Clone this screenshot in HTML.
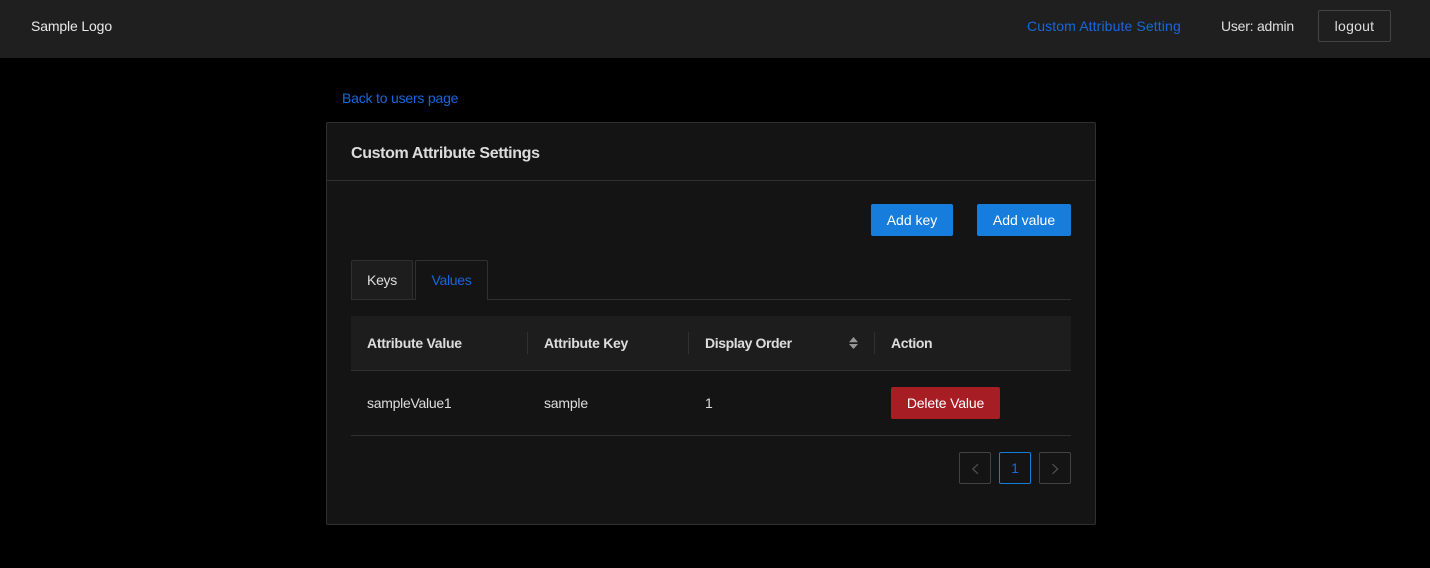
<!DOCTYPE html>
<html lang="en">
<head>
<meta charset="utf-8">
<title>Custom Attribute Settings</title>
<style>
html,body{margin:0;padding:0;background:#000;width:1430px;height:568px;overflow:hidden}
body{position:relative;font-family:"Liberation Sans",sans-serif;font-size:14px;color:rgba(255,255,255,.85)}
.b{position:absolute;box-sizing:border-box}
.t{position:absolute;white-space:nowrap;line-height:22px;height:22px}
.s{font-weight:700}
.l{color:#1668dc}
.btn{position:absolute;box-sizing:border-box;height:32px;line-height:32px;text-align:center;color:#fff;border-radius:2px;white-space:nowrap}
.sep{position:absolute;top:332px;width:1px;height:22px;background:#303030}
.pg{position:absolute;top:452px;width:32px;height:32px;box-sizing:border-box;border:1px solid #434343;border-radius:2px}
</style>
</head>
<body>
<div class="b" style="left:0;top:0;width:1430px;height:58px;background:#1f1f1f"></div>
<div class="t" style="left:31px;top:15px;letter-spacing:-.14px;color:rgba(255,255,255,.9)">Sample Logo</div>
<div class="t l" style="left:1027px;top:15px;letter-spacing:.12px">Custom Attribute Setting</div>
<div class="t" style="left:1221px;top:15px;letter-spacing:-.23px">User: admin</div>
<div class="b" style="left:1318px;top:10px;width:73px;height:32px;border:1px solid #434343;border-radius:2px;text-align:center;line-height:31px;letter-spacing:.25px">logout</div>

<div class="t l" style="left:342px;top:87px;letter-spacing:-.2px">Back to users page</div>

<div class="b" style="left:326px;top:122px;width:770px;height:403px;background:#141414;border:1px solid #303030;border-radius:2px"></div>
<div class="b" style="left:327px;top:180px;width:768px;height:1px;background:#303030"></div>
<div class="t s" style="left:351px;top:143px;font-size:16px;letter-spacing:-.36px">Custom Attribute Settings</div>

<div class="btn" style="left:871px;top:204px;width:82px;background:#177ddc">Add key</div>
<div class="btn" style="left:977px;top:204px;width:94px;background:#177ddc">Add value</div>

<div class="b" style="left:351px;top:299px;width:720px;height:1px;background:#303030"></div>
<div class="b" style="left:351px;top:260px;width:62px;height:40px;background:#1d1d1d;border:1px solid #303030;border-radius:2px 2px 0 0;text-align:center;line-height:39px;letter-spacing:-.3px">Keys</div>
<div class="b l" style="left:415px;top:260px;width:73px;height:40px;background:#141414;border:1px solid #303030;border-bottom:0;border-radius:2px 2px 0 0;text-align:center;line-height:39px;letter-spacing:-.3px">Values</div>

<div class="b" style="left:351px;top:316px;width:720px;height:55px;background:#1d1d1d;border-bottom:1px solid #303030"></div>
<div class="sep" style="left:527px"></div>
<div class="sep" style="left:688px"></div>
<div class="sep" style="left:874px"></div>
<div class="t s" style="left:367px;top:332px;letter-spacing:-.27px">Attribute Value</div>
<div class="t s" style="left:544px;top:332px;letter-spacing:-.3px">Attribute Key</div>
<div class="t s" style="left:705px;top:332px;letter-spacing:-.4px">Display Order</div>
<div class="t s" style="left:891px;top:332px;letter-spacing:-.4px">Action</div>
<svg class="b" style="left:848px;top:336px" width="11" height="14" viewBox="0 0 11 14"><path d="M5.5 1 L10 6.2 H1 Z M1 8 H10 L5.5 13 Z" fill="#979797"/></svg>

<div class="t" style="left:367px;top:392px;letter-spacing:-.27px">sampleValue1</div>
<div class="t" style="left:544px;top:392px;letter-spacing:-.2px">sample</div>
<div class="t" style="left:705px;top:392px">1</div>
<div class="btn" style="left:891px;top:387px;width:109px;background:#a61d24;letter-spacing:-.15px">Delete Value</div>
<div class="b" style="left:351px;top:435px;width:720px;height:1px;background:#303030"></div>

<div class="pg" style="left:959px"><svg style="position:absolute;left:10px;top:10px" width="10" height="12" viewBox="0 0 10 12"><path d="M8 1.2 L2.8 6 L8 10.8" fill="none" stroke="#505050" stroke-width="1.2"/></svg></div>
<div class="pg" style="left:999px;border-color:#177ddc;color:#1668dc;text-align:center;line-height:30px">1</div>
<div class="pg" style="left:1039px"><svg style="position:absolute;left:10px;top:10px" width="10" height="12" viewBox="0 0 10 12"><path d="M2.5 1.2 L7.7 6 L2.5 10.8" fill="none" stroke="#505050" stroke-width="1.2"/></svg></div>
</body>
</html>
